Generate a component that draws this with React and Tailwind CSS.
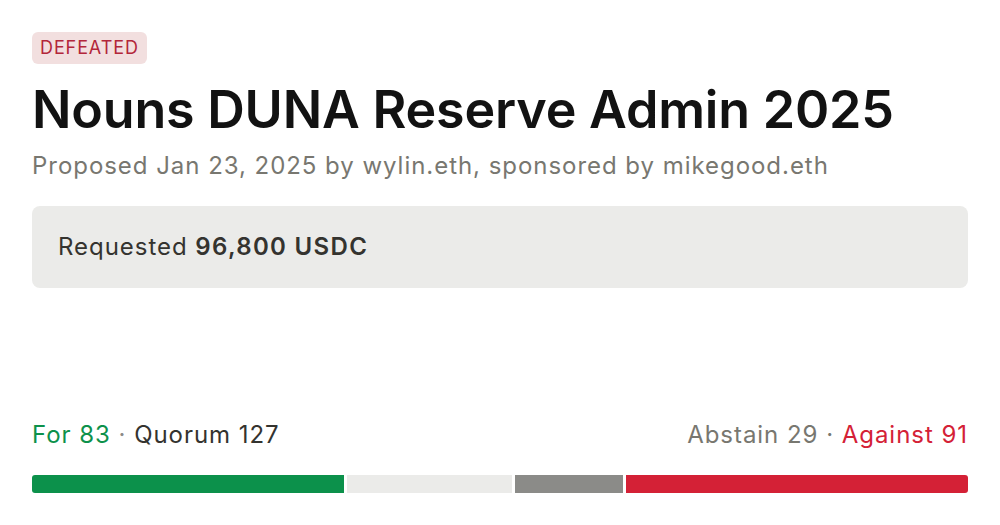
export default function App() {
  const forVotes = 83;
  const quorum = 127;
  const abstain = 29;
  const against = 91;

  return (
    <div
      className="h-[525px] w-full bg-white p-8 flex flex-col"
      style={{ fontFamily: "Inter, 'Noto Sans', sans-serif" }}
    >
      {/* header */}
      <div>
        <span className="inline-flex h-8 items-center rounded-md bg-[#f2dfdf] px-2 text-[18px] leading-8 tracking-[0.05em] text-[#b3263a]">
          DEFEATED
        </span>
      </div>
      <h1 className="mt-4 text-[52px] leading-[60px] font-semibold tracking-[-0.2px] text-[#121212]">
        Nouns DUNA Reserve Admin 2025
      </h1>
      <p className="mt-2.5 text-[24px] leading-8 tracking-[0.04em] text-[#787770]">
        Proposed Jan 23, 2025 by wylin.eth, sponsored by mikegood.eth
      </p>

      <div className="mt-6 rounded-lg bg-[#ebebe9] pl-[26px] pr-6 py-6 text-[24px] leading-[34px] tracking-[0.04em] text-[#34332f]">
        Requested{" "}
        <span className="font-semibold tracking-[0.055em]">96,800 USDC</span>
      </div>

      {/* votes */}
      <div className="mt-auto">
        <div className="flex items-center justify-between text-[24px] leading-8 tracking-[0.04em]">
          <div>
            <span className="text-[#0d914b]">For {forVotes}</span>
            <span className="text-[#8b8b88]"> · </span>
            <span className="text-[#34332f]">Quorum {quorum}</span>
          </div>
          <div>
            <span className="text-[#787770]">Abstain {abstain}</span>
            <span className="text-[#787770]"> · </span>
            <span className="text-[#d42136]">Against {against}</span>
          </div>
        </div>
        <div className="mt-6 flex h-[18px] gap-[3px] overflow-hidden rounded-[3px]">
          <div className="grow-[83] basis-0 bg-[#0c914b]" />
          <div className="grow-[44] basis-0 bg-[#ebebe9]" />
          <div className="grow-[29] basis-0 bg-[#8b8b88]" />
          <div className="grow-[91] basis-0 bg-[#d42136]" />
        </div>
      </div>
    </div>
  );
}
